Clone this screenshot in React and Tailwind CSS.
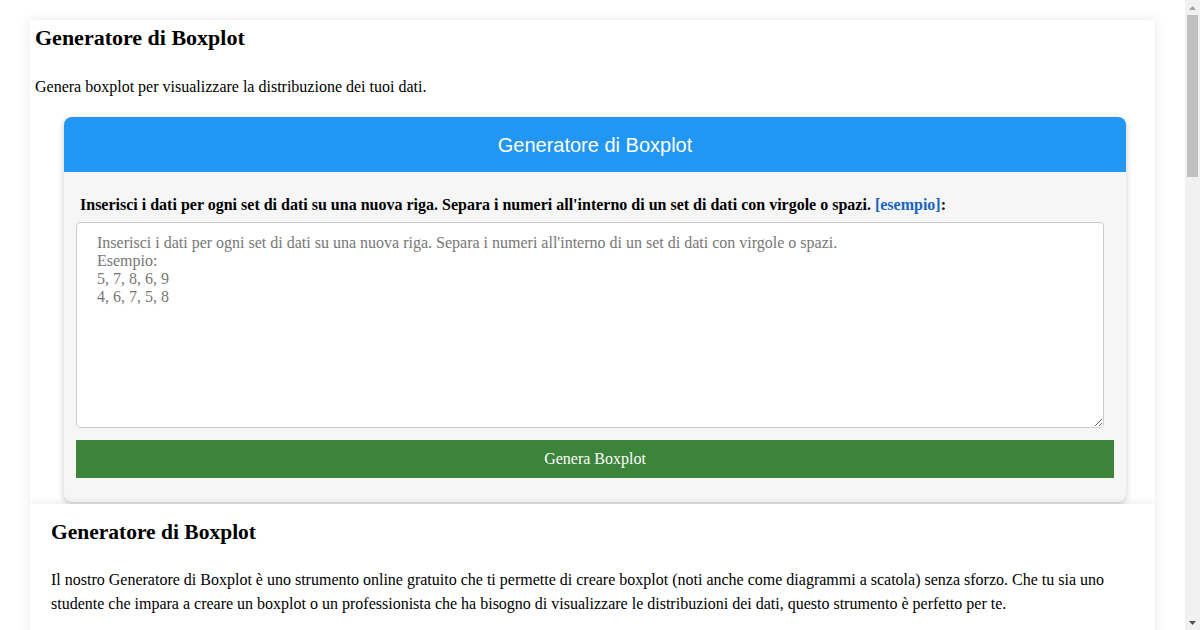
export default function App() {
  const placeholder =
    "Inserisci i dati per ogni set di dati su una nuova riga. Separa i numeri all'interno di un set di dati con virgole o spazi.\nEsempio:\n5, 7, 8, 6, 9\n4, 6, 7, 5, 8"

  return (
    <div className="flex h-[630px] overflow-hidden bg-white font-['Liberation_Serif',serif] text-black">
      <div className="h-full flex-1 overflow-hidden pt-5">
        <div className="mx-[30px] bg-white px-[5px] pb-[2px] pt-[5px] shadow-[0_0_10px_rgba(0,0,0,0.1)]">
          <h2 className="text-[22px] font-bold leading-[25px]">Generatore di Boxplot</h2>
          <p className="mt-[28px] text-[16px] leading-[18px]">
            Genera boxplot per visualizzare la distribuzione dei tuoi dati.
          </p>

          <div className="ml-[29px] mt-[21px] w-[1062px] overflow-hidden rounded-lg bg-[#f6f6f6] shadow-[0_2px_6px_rgba(0,0,0,0.22)]">
            <div className="flex h-[55px] items-center justify-center bg-[#2196f3] font-['Liberation_Sans',Arial,sans-serif] text-[20px] text-white">
              Generatore di Boxplot
            </div>
            <div className="px-3 pb-6 pt-6">
              <label className="block pl-1 text-[16px] font-bold leading-[18px]">
                Inserisci i dati per ogni set di dati su una nuova riga. Separa i numeri all'interno di un set di dati con virgole o spazi.{' '}
                <a href="#" className="text-[#1565c0]">[esempio]</a>:
              </label>
              <textarea
                className="mt-2 block h-[206px] w-[1028px] rounded border border-[#cccccc] bg-white px-5 pt-[11px] font-['Liberation_Serif',serif] text-[16px] leading-[18px] placeholder:text-[#777777]"
                placeholder={placeholder}
              />
              <button className="mt-3 block h-[38px] w-full bg-[#3b8439] font-['Liberation_Serif',serif] text-[16px] text-white">
                Genera Boxplot
              </button>
            </div>
          </div>
        </div>

        <div className="mx-[30px] min-h-[200px] bg-white pl-[21px] pr-5 pt-[14px] shadow-[0_0_10px_rgba(0,0,0,0.1)]">
          <h2 className="text-[21.5px] font-bold leading-[28px]">Generatore di Boxplot</h2>
          <p className="mt-[22px] text-[16px] leading-[24px]">
            Il nostro Generatore di Boxplot è uno strumento online gratuito che ti permette di creare boxplot (noti anche come diagrammi a scatola) senza sforzo. Che tu sia uno studente che impara a creare un boxplot o un professionista che ha bisogno di visualizzare le distribuzioni dei dati, questo strumento è perfetto per te.
          </p>
        </div>
      </div>

      <div className="flex h-full w-[15px] shrink-0 flex-col bg-[#f1f1f1]">
        <div className="flex h-[15px] items-center justify-center">
          <svg width="7" height="4" viewBox="0 0 7 4"><path d="M3.5 0L7 4H0z" fill="#a3a3a3" /></svg>
        </div>
        <div className="mx-[2px] h-[162px] bg-[#c1c1c1]" />
        <div className="flex-1" />
        <div className="flex h-[15px] items-center justify-center">
          <svg width="7" height="4" viewBox="0 0 7 4"><path d="M0 0h7L3.5 4z" fill="#505050" /></svg>
        </div>
      </div>
    </div>
  )
}
